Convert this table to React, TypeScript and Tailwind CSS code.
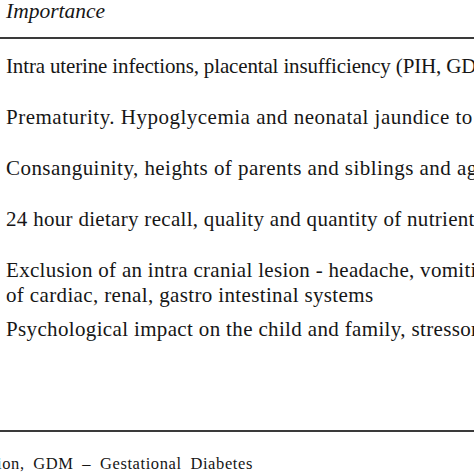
export default function App() {
  const rows = [
    { text: "Intra uterine infections, placental insufficiency (PIH, GDM)", track: "tracking-[-0.15px]" },
    { text: "Prematurity. Hypoglycemia and neonatal jaundice to suggest", track: "tracking-[0.5px]" },
    { text: "Consanguinity, heights of parents and siblings and age", track: "tracking-[0.45px]" },
    { text: "24 hour dietary recall, quality and quantity of nutrients", track: "tracking-[0.3px]" },
  ];

  return (
    <div
      className="w-[474px] h-[474px] overflow-hidden bg-white text-[#161616]"
      style={{ fontFamily: '"Liberation Serif", "Times New Roman", serif' }}
    >
      {/* header */}
      <div className="h-[37px] pl-[6px] pt-[1px]">
        <div className="text-[21.5px] leading-[20px] italic">Importance</div>
      </div>
      <div className="h-[2px] bg-[#3a3a3a]" />

      {/* body */}
      <div className="pt-[15px] pl-[6px] text-[21px] leading-[25px]">
        {rows.map((r) => (
          <div key={r.text} className={`h-[51px] whitespace-nowrap ${r.track}`}>
            {r.text}
          </div>
        ))}
        <div className="h-[59px] whitespace-nowrap">
          <div className="tracking-[0.3px]">Exclusion of an intra cranial lesion - headache, vomiting</div>
          <div className="tracking-[0.36px]">of cardiac, renal, gastro intestinal systems</div>
        </div>
        <div className="h-[113px] whitespace-nowrap tracking-[0.35px]">
          Psychological impact on the child and family, stressors
        </div>
      </div>

      <div className="h-[2px] bg-[#3a3a3a]" />

      {/* footnote */}
      <div className="pt-[22px] -ml-[3px] text-[16.5px] leading-[20px] tracking-[0.6px] [word-spacing:4px] whitespace-nowrap">
        ion, GDM – Gestational Diabetes
      </div>
    </div>
  );
}
